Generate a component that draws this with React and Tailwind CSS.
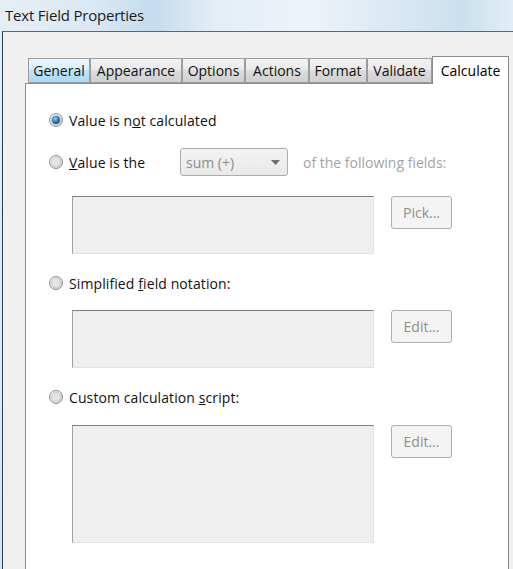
import React from "react";

const font = { fontFamily: '"Open Sans", "Noto Sans", Arial, sans-serif' };

const tabs = [
  { name: "General", w: "w-[62px]", state: "hover" },
  { name: "Appearance", w: "w-[92px]" },
  { name: "Options", w: "w-[63px]" },
  { name: "Actions", w: "w-[64px]" },
  { name: "Format", w: "w-[58px]" },
  { name: "Validate", w: "w-[65px]" },
  { name: "Calculate", w: "w-[77px]", state: "active" },
];

const Radio = ({ checked }) => (
  <svg width="14" height="14" viewBox="0 0 14 14" className="shrink-0">
    <defs>
      <linearGradient id="rg-off" x1="0" y1="0" x2="1" y2="1">
        <stop offset="0" stopColor="#f6f6f6" />
        <stop offset="1" stopColor="#cfcfcf" />
      </linearGradient>
      <radialGradient id="rg-on" cx="0.4" cy="0.35" r="0.7">
        <stop offset="0" stopColor="#9fd3f7" />
        <stop offset="0.5" stopColor="#2a86c8" />
        <stop offset="1" stopColor="#0f4375" />
      </radialGradient>
    </defs>
    <circle cx="7" cy="7" r="6.5" fill="url(#rg-off)" stroke="#8c8e92" />
    <circle cx="7" cy="7" r="4.6" fill="#e4e4e4" stroke="#bdbdbd" strokeWidth="0.6" />
    {checked && <circle cx="7" cy="7" r="4" fill="url(#rg-on)" />}
  </svg>
);

const OptionRow = ({ checked, children, className = "" }) => (
  <div className={`flex items-center h-[20px] gap-[6px] ${className}`}>
    <Radio checked={checked} />
    <span className="text-[14px] text-[#111] tracking-[0.1px]">{children}</span>
  </div>
);

const FieldBox = ({ height, label, className = "" }) => (
  <div className={`flex items-start gap-[17px] ml-[23px] ${className}`}>
    <div
      className={`w-[302px] ${height} bg-[#efefef] border-t border-l border-r border-b border-t-[#7f7f7f] border-l-[#a0a0a0] border-r-[#e2e2e2] border-b-[#e2e2e2]`}
    />
    <button className="w-[61px] h-[33px] rounded-[3px] border border-[#adadad] bg-[#f4f4f4] text-[14px] text-[#8e8e8e]">
      {label}
    </button>
  </div>
);

export default function App() {
  return (
    <div
      className="w-[513px] h-[569px] overflow-hidden flex flex-col bg-[linear-gradient(180deg,#e2edf6_0%,#d6e6f2_100%)]"
      style={font}
    >
      {/* title bar */}
      <div className="h-[31px] shrink-0 flex items-center pl-[5px] bg-[linear-gradient(90deg,#e6eef5_0%,#dbe9f4_18%,#c4dcee_30%,#e4eef6_42%,#eef3f8_60%,#d9e8f3_78%,#cbe0ef_90%,#e3edf5_100%)]">
        <span className="text-[15px] text-[#1b1b1b] tracking-[-0.2px]">Text Field Properties</span>
      </div>

      {/* dialog body */}
      <div className="flex-1 ml-[2px] border-l border-t border-l-[#2f3b4e] border-t-[#5c6570] bg-[#f0f0f0] pl-[22px] pt-[24px]">
        {/* tabs */}
        <div className="flex items-end h-[28px] pl-[3px] relative z-10 -mb-px">
          {tabs.map((t) =>
            t.state === "active" ? (
              <div
                key={t.name}
                className={`${t.w} h-[28px] bg-white border-t border-l border-r border-[#898c95] flex items-start justify-center pt-[3px] text-[14px] text-black`}
              >
                {t.name}
              </div>
            ) : (
              <div
                key={t.name}
                className={`${t.w} h-[25px] mb-px border-t border-l border-r border-b border-[#9a9ca2] flex items-center justify-center text-[14px] text-[#111] ${
                  t.state === "hover"
                    ? "bg-[linear-gradient(180deg,#eaf6fd_0%,#d9f0fc_45%,#bee6fd_50%,#a7d9f5_100%)] border-[#3c7fb1]"
                    : "bg-[linear-gradient(180deg,#f2f2f2_0%,#ebebeb_45%,#dddddd_50%,#cfcfcf_100%)]"
                }`}
              >
                {t.name}
              </div>
            )
          )}
        </div>

        {/* panel */}
        <div className="w-[484px] h-[600px] bg-white border-t border-l border-r border-[#898c95] pl-[23px] flex flex-col">
          <OptionRow checked className="mt-[26px]">
            Value is n<u>o</u>t calculated
          </OptionRow>

          <div className="flex items-center h-[28px] mt-[18px]">
            <div className="flex items-center gap-[6px] w-[131px]">
              <Radio />
              <span className="text-[14px] text-[#111] tracking-[0.1px]">
                <u>V</u>alue is the
              </span>
            </div>
            <div className="w-[108px] h-[28px] rounded-[3px] border border-[#acacac] bg-[linear-gradient(180deg,#f3f3f3_0%,#e9e9e9_100%)] flex items-center justify-between pl-[5px] pr-[7px]">
              <span className="text-[14px] text-[#8c8c8c]">sum (+)</span>
              <svg width="9" height="5" viewBox="0 0 9 5">
                <path d="M0 0 L9 0 L4.5 5 Z" fill="#6e6e6e" />
              </svg>
            </div>
            <span className="ml-[15px] text-[14px] text-[#a3a3a3]">of the following fields:</span>
          </div>

          <FieldBox height="h-[58px]" label="Pick..." className="mt-[20px]" />

          <OptionRow className="mt-[19px]">
            Simplified <u>f</u>ield notation:
          </OptionRow>

          <FieldBox height="h-[58px]" label="Edit..." className="mt-[17px]" />

          <OptionRow className="mt-[19px]">
            Custom calculation <u>s</u>cript:
          </OptionRow>

          <FieldBox height="h-[118px]" label="Edit..." className="mt-[18px]" />
        </div>
      </div>
    </div>
  );
}
